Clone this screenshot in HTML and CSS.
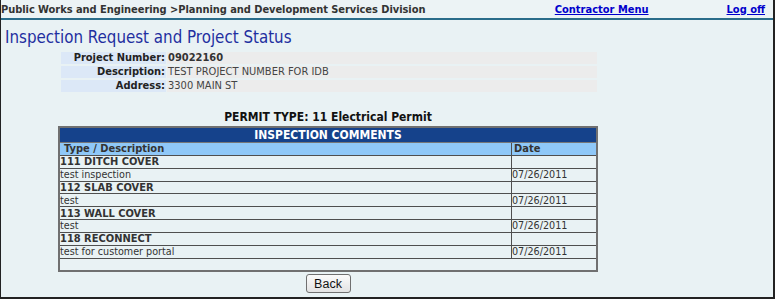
FILE: index.html
```html
<!DOCTYPE html>
<html>
<head>
<meta charset="utf-8">
<link rel="stylesheet" href="styles.css">
</head>
<body>
<div class="frame">
  <div class="topbar">
    <div class="crumb">Public Works and Engineering &gt;Planning and Development Services Division</div>
    <a class="toplink menu" href="#">Contractor Menu</a>
    <a class="toplink logoff" href="#">Log off</a>
  </div>
  <h1 class="title">Inspection Request and Project Status</h1>
  <div class="content">
    <table class="info">
      <tr><td class="lbl">Project Number:</td><td class="val strong">09022160</td></tr>
      <tr><td class="lbl">Description:</td><td class="val">TEST PROJECT NUMBER FOR IDB</td></tr>
      <tr><td class="lbl">Address:</td><td class="val">3300 MAIN ST</td></tr>
    </table>
    <div class="permit">PERMIT TYPE: 11 Electrical Permit</div>
    <table class="comments">
      <tr><th class="cap" colspan="2">INSPECTION COMMENTS</th></tr>
      <tr class="colhead"><td class="c-desc">Type / Description</td><td class="c-date">Date</td></tr>
      <tr class="type"><td>111 DITCH COVER</td><td></td></tr>
      <tr><td>test inspection</td><td>07/26/2011</td></tr>
      <tr class="type"><td>112 SLAB COVER</td><td></td></tr>
      <tr><td>test</td><td>07/26/2011</td></tr>
      <tr class="type"><td>113 WALL COVER</td><td></td></tr>
      <tr><td>test</td><td>07/26/2011</td></tr>
      <tr class="type"><td>118 RECONNECT</td><td></td></tr>
      <tr><td>test for customer portal</td><td>07/26/2011</td></tr>
      <tr class="empty"><td colspan="2"></td></tr>
    </table>
    <div class="actions"><button class="back" type="button">Back</button></div>
  </div>
</div>
</body>
</html>
```
FILE: styles.css
```css
html, body {
  margin: 0;
  padding: 0;
}
body {
  background: #e9f2f4;
  font-family: "DejaVu Sans Condensed", "DejaVu Sans", sans-serif;
}
.frame {
  box-sizing: border-box;
  width: 775px;
  height: 299px;
  border-left: 1px solid #222;
  border-right: 2px solid #222;
  border-bottom: 2px solid #222;
  background: #e9f2f4;
  overflow: hidden;
}
.topbar {
  display: flex;
  align-items: center;
  height: 18px;
  border-bottom: 2px solid #2a6c8a;
  background: #ecf3f5;
  font-size: 11px;
  font-weight: bold;
}
.crumb {
  flex: 1;
  color: #333;
  white-space: nowrap;
  letter-spacing: -0.05px;
}
.toplink {
  color: #0000cc;
  text-decoration: underline;
}
.menu { margin-right: 78px; }
.logoff { margin-right: 8px; }
.title {
  margin: 8px 0 0 4px;
  font-size: 16.8px;
  font-weight: normal;
  color: #1f2fa0;
  line-height: 18px;
}
.content {
  width: 540px;
  margin-left: 57px;
  text-align: center;
}
.info {
  width: 538px;
  margin: 4px 0 0 2px;
  border-spacing: 1px 2px;
  font-size: 11px;
  line-height: 12px;
}
.info td {
  height: 12px;
  padding: 0 1px;
}
.lbl {
  width: 103px;
  background: #dce8f7;
  text-align: right;
  font-weight: bold;
  color: #222;
}
.val {
  background: #ececec;
  text-align: left;
  color: #444;
}
.val.strong { font-weight: bold; color: #333; }
.permit {
  margin-top: 17px;
  font-size: 12px;
  font-weight: bold;
  color: #111;
  line-height: 13px;
}
.comments {
  width: 540px;
  margin-top: 2px;
  border-collapse: collapse;
  border: 2px solid #707070;
  font-size: 10.7px;
  line-height: 11px;
  text-align: left;
  color: #333;
}
.comments td, .comments th {
  border: 1px solid #4f4f4f;
  padding: 0;
  height: 11.85px;
}
.comments th.cap {
  background: #15428b;
  color: #fff;
  font-size: 12px;
  font-weight: bold;
  text-align: center;
  height: 14px;
  border-color: #777;
}
.colhead td {
  background: #8fc8f8;
  font-weight: bold;
  font-size: 11px;
}
.c-desc { padding-left: 4px !important; }
.c-date { width: 82px; padding-left: 2px !important; }
.type td { font-weight: bold; font-size: 11px; }
.actions {
  display: flex;
  justify-content: center;
  margin-top: 2px;
}
.back {
  width: 45px;
  height: 19px;
  padding: 0;
  font-family: "Liberation Sans", Arial, sans-serif;
  font-size: 12.5px;
  color: #111;
  background: linear-gradient(#fbfbfb, #e3e3e3);
  border: 1px solid #707070;
  border-radius: 3px;
}
```
